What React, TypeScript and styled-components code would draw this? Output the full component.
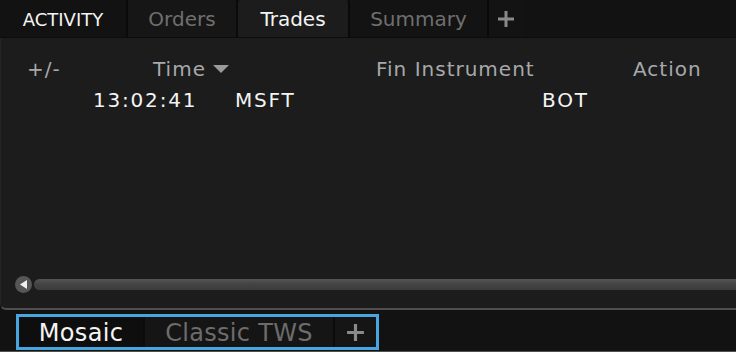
import React from 'react';
import styled, { createGlobalStyle } from 'styled-components';

const GlobalStyle = createGlobalStyle`
  html, body { margin: 0; padding: 0; background: #121212; }
  body { font-family: "DejaVu Sans", Verdana, sans-serif; }
  * { box-sizing: border-box; }
`;

const Screen = styled.div`
  width: 736px;
  height: 352px;
  display: flex;
  flex-direction: column;
  background: #121212;
  overflow: hidden;
`;

const TopBar = styled.div`
  height: 38px;
  flex-shrink: 0;
  display: flex;
  background: #121212;
  border-bottom: 1px solid #0c0c0c;
`;

const Tab = styled.div<{ $w: number; $active?: boolean; $caps?: boolean; $bg?: string; $last?: boolean }>`
  width: ${p => p.$w}px;
  display: flex;
  align-items: center;
  justify-content: center;
  padding-top: 1px;
  font-size: ${p => (p.$caps ? 18 : 20)}px;
  color: ${p => (p.$active || p.$caps ? '#f4f4f4' : '#6f6f6f')};
  background: ${p => (p.$active ? '#1c1c1c' : p.$bg || '#131313')};
  border-right: ${p => (p.$last ? 'none' : '2px solid #0a0a0a')};
  border-top-left-radius: ${p => (p.$active ? 3 : 0)}px;
  border-top-right-radius: ${p => (p.$active ? 3 : 0)}px;
  white-space: nowrap;
`;

const PlusIcon = ({ size }: { size: number }) => (
  <svg width={size} height={size} viewBox="0 0 18 18">
    <path d="M9 1v16M1 9h16" stroke="#8a8a8a" strokeWidth="3" fill="none" />
  </svg>
);

const Panel = styled.div`
  height: 272px;
  flex-shrink: 0;
  display: flex;
  flex-direction: column;
  padding: 19px 0 15px 0;
  background: #1c1c1c;
  border-bottom: 2px solid #4e4e4e;
  border-left: 1px solid #242424;
  border-bottom-left-radius: 6px;
`;

const Row = styled.div<{ $cols: string; $pad: number; $head?: boolean }>`
  display: grid;
  grid-template-columns: ${p => p.$cols};
  padding-left: ${p => p.$pad}px;
  height: 24px;
  line-height: 24px;
  font-size: 20px;
  letter-spacing: ${p => (p.$head ? 1 : 1.8)}px;
  color: ${p => (p.$head ? '#a7a9ab' : '#f4f4f4')};
  margin-bottom: 7px;
  white-space: nowrap;
`;

const SortCell = styled.div`
  display: flex;
  align-items: center;
  gap: 7px;
`;

const SortArrow = () => (
  <svg width="16" height="8" viewBox="0 0 16 8">
    <path d="M0 0h16L8 8z" fill="#9a9a9a" />
  </svg>
);

const Spacer = styled.div`
  flex: 1;
`;

const ScrollBar = styled.div`
  display: flex;
  align-items: center;
  height: 17px;
  padding-left: 14px;
`;

const ScrollButton = styled.div`
  width: 17px;
  height: 17px;
  border-radius: 50%;
  background: #565656;
  display: flex;
  align-items: center;
  justify-content: center;
  flex-shrink: 0;
`;

const ScrollTrack = styled.div`
  flex: 1;
  height: 11px;
  margin-left: 2px;
  border-radius: 6px 0 0 6px;
  background: linear-gradient(#545454, #434343 50%, #3c3c3c);
`;

const BottomArea = styled.div`
  flex: 1;
  padding: 4px 0 0 16px;
  background: #121212;
  border-bottom: 1px solid #505050;
`;

const BottomBox = styled.div`
  width: 363px;
  height: 36px;
  display: flex;
  border: 3px solid #48a6de;
  background: #151515;
`;

const BottomTab = styled.div<{ $w: number; $active?: boolean }>`
  width: ${p => p.$w}px;
  display: flex;
  align-items: flex-start;
  justify-content: center;
  padding-top: 3px;
  line-height: 27px;
  font-size: 24px;
  letter-spacing: 0.3px;
  color: ${p => (p.$active ? '#f4f4f4' : '#6c6c6c')};
  background: ${p => (p.$active ? '#0e0e0e' : '#151515')};
  border-right: 2px solid #0b0b0b;
  white-space: nowrap;
`;

const BottomPlus = styled.div`
  flex: 1;
  display: flex;
  align-items: center;
  justify-content: center;
`;

export default function App() {
  return (
    <>
      <GlobalStyle />
      <Screen>
        <TopBar>
          <Tab $w={128} $caps $bg="#121212">ACTIVITY</Tab>
          <Tab $w={110} $bg="#161616">Orders</Tab>
          <Tab $w={112} $active>Trades</Tab>
          <Tab $w={139}>Summary</Tab>
          <Tab $w={34} $last>
            <PlusIcon size={18} />
          </Tab>
        </TopBar>
        <Panel>
          <Row $head $pad={26} $cols="126px 223px 257px auto">
            <div>+/-</div>
            <SortCell>
              <span>Time</span>
              <SortArrow />
            </SortCell>
            <div>Fin Instrument</div>
            <div>Action</div>
          </Row>
          <Row $pad={92} $cols="142px 307px auto">
            <div>13:02:41</div>
            <div>MSFT</div>
            <div>BOT</div>
          </Row>
          <Spacer />
          <ScrollBar>
            <ScrollButton>
              <svg width="8" height="9" viewBox="0 0 8 9">
                <path d="M7 0v9L0 4.5z" fill="#f0f0f0" />
              </svg>
            </ScrollButton>
            <ScrollTrack />
          </ScrollBar>
        </Panel>
        <BottomArea>
          <BottomBox>
            <BottomTab $w={126} $active>Mosaic</BottomTab>
            <BottomTab $w={190}>Classic TWS</BottomTab>
            <BottomPlus>
              <PlusIcon size={19} />
            </BottomPlus>
          </BottomBox>
        </BottomArea>
      </Screen>
    </>
  );
}
